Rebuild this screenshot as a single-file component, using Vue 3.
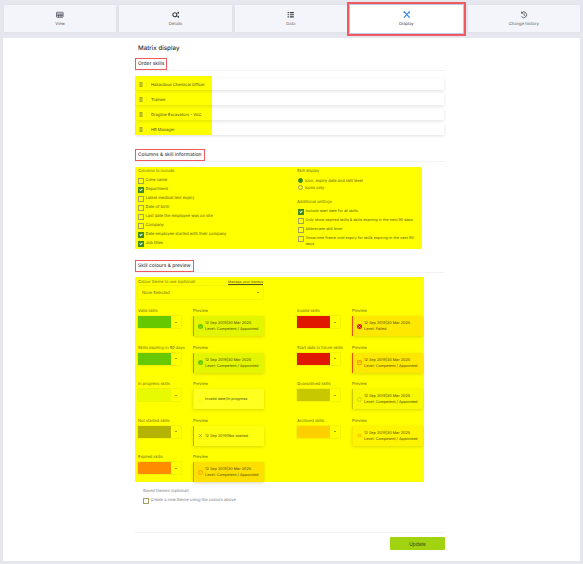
<template>
  <div class="page">
    <nav class="tabs">
      <div v-for="tab in tabs" :key="tab.label" class="tab" :class="{ active: tab.active }">
        <svg v-if="tab.icon === 'view'" viewBox="0 0 12 12" class="tab-icon"><path d="M1.500 2h9a.8.8 0 0 1 .8.8v6.400a.8.8 0 0 1-.8.8h-9a.8.8 0 0 1-.8-.8V2.800a.8.8 0 0 1 .8-.8zM.7 4.800h10.600M.7 7.400h10.600M4.200 4.800V10M7.800 4.800V10" fill="none" stroke="#3a3f4a" stroke-width="1.100"/></svg>
        <svg v-else-if="tab.icon === 'details'" viewBox="0 0 12 12" class="tab-icon"><circle cx="4.500" cy="6" r="3.200" fill="none" stroke="#3a3f4a" stroke-width="1.800"/><circle cx="10" cy="2.800" r="1.500" fill="#3a3f4a"/><circle cx="10" cy="9.200" r="1.500" fill="#3a3f4a"/></svg>
        <svg v-else-if="tab.icon === 'data'" viewBox="0 0 12 12" class="tab-icon"><path d="M1 2.500h2M4.500 2.500h6.500M1 6h2M4.500 6h6.500M1 9.500h2M4.500 9.500h6.500" fill="none" stroke="#3a3f4a" stroke-width="1.900"/></svg>
        <svg v-else-if="tab.icon === 'display'" viewBox="0 0 12 12" class="tab-icon"><path d="M2 1.500l8.500 9M10 1.500l-8.500 9" fill="none" stroke="#3d8fe8" stroke-width="2"/><circle cx="2" cy="2" r="1.500" fill="#3d8fe8"/><circle cx="10.200" cy="2" r="1.500" fill="#3d8fe8"/></svg>
        <svg v-else viewBox="0 0 12 12" class="tab-icon"><path d="M2.500 3.200A4.600 4.600 0 1 1 2.200 8.500M2.500 1v2.500H5M6.500 3.800v2.700l1.800 1.200" fill="none" stroke="#3a3f4a" stroke-width="1.200"/></svg>
        <span>{{ tab.label }}</span>
      </div>
    </nav>

    <main class="card">
      <div class="content">
        <h1>Matrix display</h1>

        <div class="section-head first"><h2>Order skills</h2></div>
        <div class="order-list">
          <div v-for="skill in orderedSkills" :key="skill" class="order-row">
            <div class="order-name">
              <span class="drag">
                <svg viewBox="0 0 6 8"><path d="M.5 1h5M.5 3h5M.5 5h5M.5 7h5" stroke="#555" stroke-width=".9"/></svg>
              </span>
              <span>{{ skill }}</span>
            </div>
          </div>
        </div>

        <div class="section-head second"><h2>Columns &amp; skill information</h2></div>
        <div class="columns-box">
          <div class="col">
            <div class="field-label">Columns to include</div>
            <label v-for="c in columnsToInclude" :key="c.label" class="check">
              <span class="box" :class="{ on: c.on }"></span>{{ c.label }}
            </label>
          </div>
          <div class="col right">
            <div class="field-label">Skill display</div>
            <label class="radio"><span class="dot on"></span>Icon, expiry date and skill level</label>
            <label class="radio"><span class="dot"></span>Icons only</label>
            <div class="field-label additional">Additional settings</div>
            <label v-for="c in additional" :key="c.label" class="check">
              <span class="box" :class="{ on: c.on }"></span><span>{{ c.label }}</span>
            </label>
          </div>
        </div>

        <div class="section-head third"><h2>Skill colours &amp; preview</h2></div>
        <div class="colours-box">
          <div class="theme-col">
            <div class="theme-label"><span>Colour theme to use (optional)</span><a>Manage your themes</a></div>
            <div class="select"><span>None Selected</span><i class="caret"></i></div>
          </div>
          <div class="skill-grid">
            <div v-for="s in skillColours" :key="s.label" class="skill">
              <div class="picker-col">
                <div class="field-label">{{ s.label }}</div>
                <div class="picker">
                  <span class="swatch" :style="{ background: s.color }"></span>
                  <span class="picker-caret"><i class="caret"></i></span>
                </div>
              </div>
              <div class="preview-col">
                <div class="field-label">Preview</div>
                <div class="preview" :style="{ background: s.bg, borderLeftColor: s.edge }">
                  <svg class="status" viewBox="0 0 10 10">
                    <template v-if="s.kind === 'tick'">
                      <circle cx="5" cy="5" r="5" :fill="s.mark"/>
                      <path d="M2.800 5.200l1.600 1.600 2.800-3.200" fill="none" stroke="#e4f500" stroke-width="1.200"/>
                    </template>
                    <template v-else-if="s.kind === 'fail'">
                      <circle cx="5" cy="5" r="5" :fill="s.mark"/>
                      <path d="M3 3l4 4M7 3l-4 4" stroke="#fff" stroke-width="1.300"/>
                    </template>
                    <template v-else-if="s.kind === 'calendar'">
                      <rect x=".8" y="1.500" width="8.400" height="7.700" fill="none" :stroke="s.mark" stroke-width="1.300"/>
                      <path d="M.8 4h8.400" :stroke="s.mark" stroke-width="1.300"/>
                    </template>
                    <path v-else-if="s.kind === 'cross'" d="M2 2l6 6M8 2l-6 6" :stroke="s.mark" stroke-width="1.200"/>
                    <rect v-else-if="s.kind === 'square'" x="1" y="1" width="8" height="8" rx="1" :fill="s.mark"/>
                    <circle v-else cx="5" cy="5" r="4" fill="none" :stroke="s.mark" stroke-width="1.500"/>
                  </svg>
                  <div>
                    <div>{{ s.line1 }}</div>
                    <div v-if="s.line2">{{ s.line2 }}</div>
                  </div>
                </div>
              </div>
            </div>
          </div>
        </div>

        <div class="saved">
          <div class="field-label">Saved themes (optional)</div>
          <label class="check"><span class="box"></span>Create a new theme using the colours above</label>
        </div>

        <div class="footer">
          <button class="update">Update</button>
        </div>
      </div>
    </main>
  </div>
</template>

<script setup>
const tabs = [
  { label: 'View', icon: 'view' },
  { label: 'Details', icon: 'details' },
  { label: 'Data', icon: 'data' },
  { label: 'Display', icon: 'display', active: true },
  { label: 'Change history', icon: 'history' }
]

const orderedSkills = ['Hazardous Chemical Officer', 'Trainee', 'Dragline Excavators - VoC', 'HR Manager']

const columnsToInclude = [
  { label: 'Crew name' },
  { label: 'Department', on: true },
  { label: 'Latest medical test expiry' },
  { label: 'Date of birth' },
  { label: 'Last date the employee was on site' },
  { label: 'Company' },
  { label: 'Date employee started with their company', on: true },
  { label: 'Job titles', on: true }
]

const additional = [
  { label: 'Include start date for all skills', on: true },
  { label: 'Only show expired skills & skills expiring in the next 90 days' },
  { label: 'Abbreviate skill level' },
  { label: 'Show time frame until expiry for skills expiring in the next 90 days' }
]

const dates = '12 Sep 2019|30 Mar 2025'
const level = 'Level: Competent / Appointed'

// order runs across the two columns
const skillColours = [
  { label: 'Valid skills', color: '#66c800', bg: '#e4f500', edge: '#66c800', mark: '#66c800', kind: 'tick', line1: dates, line2: level },
  { label: 'Invalid skills', color: '#e01800', bg: '#ffe800', edge: '#e8500a', mark: '#e01800', kind: 'fail', line1: dates, line2: 'Level: Failed' },
  { label: 'Skills expiring in 90 days', color: '#66c800', bg: '#e4f500', edge: '#66c800', mark: '#66c800', kind: 'tick', line1: dates, line2: level },
  { label: 'Start date in future skills', color: '#e01800', bg: '#ffe800', edge: '#e8500a', mark: '#f08000', kind: 'calendar', line1: dates, line2: level },
  { label: 'In progress skills', color: '#e8fa00', bg: '#ffff20', edge: '#f0f800', mark: '#f0f800', kind: 'ring', line1: 'Invalid date/In progress' },
  { label: 'Quarantined skills', color: '#c8c800', bg: '#f8f800', edge: '#c8c800', mark: '#c8c800', kind: 'ring', line1: dates, line2: level },
  { label: 'Not started skills', color: '#b3b300', bg: '#ffff10', edge: '#f09a00', mark: '#8a8a20', kind: 'cross', line1: '12 Sep 2019/Not started' },
  { label: 'Archived skills', color: '#ffd000', bg: '#fff400', edge: '#f8e800', mark: '#ffd000', kind: 'square', line1: dates, line2: level },
  { label: 'Expired skills', color: '#ff8c00', bg: '#ffdf00', edge: '#ff8c00', mark: '#ff8c00', kind: 'ring', line1: dates, line2: level }
]
</script>

<style>
html, body {
  margin: 0;
  background: #e6e6ef;
}
</style>

<style scoped>
.page {
  width: 583px;
  height: 564px;
  box-sizing: border-box;
  padding: 5px 3px 3px;
  font-family: Inter, "Liberation Sans", sans-serif;
  text-rendering: geometricPrecision;
  color: #3c3f46;
  overflow: hidden;
}

.tabs {
  display: flex;
  gap: 3px;
  height: 27px;
  margin-left: 1px;
}

.tab {
  flex: 1;
  background: #f4f5fa;
  box-shadow: 0 0 2px rgba(0, 0, 0, 0.06);
  display: flex;
  flex-direction: column;
  align-items: center;
  padding-top: 6px;
  box-sizing: border-box;
  gap: 3px;
  font-size: 4.200px;
  line-height: 5px;
  color: #555;
}

.tab.active {
  background: #fff;
  color: #333;
  outline: 2px solid #ee5a5f;
  box-shadow: inset 0 0 0 1px #b9c8e4;
  margin: -1px 1px -2px -1px;
  flex: 1.02;
  padding-top: 7px;
}

.tab-icon {
  width: 7.500px;
  height: 7.500px;
}

.card {
  background: #fff;
  margin-top: 6px;
  height: 523px;
  padding-left: 132px;
  box-sizing: border-box;
}

.content {
  width: 310px;
  padding-top: 7px;
}

h1 {
  margin: 0 0 0 3px;
  font-size: 6.200px;
  font-weight: 500;
  line-height: 8px;
  color: #2f3340;
}

.section-head {
  display: flex;
  align-items: flex-start;
  border-bottom: 1px solid #f2f2f4;
  height: 11px;
  padding-left: 1px;
}

.section-head h2 {
  margin: 0;
  padding: 0 2px;
  height: 10px;
  line-height: 10px;
  font-size: 4.900px;
  font-weight: 500;
  outline: 1px solid #ee5a5f;
  color: #3c3f46;
}

.section-head.first {
  margin-top: 6px;
}

.section-head.second {
  margin-top: 15px;
}

.section-head.third {
  margin-top: 12px;
}

.order-list {
  margin-top: 5px;
  display: flex;
  flex-direction: column;
  gap: 3px;
  background: linear-gradient(to right, #ffff00 77px, transparent 77px);
  padding: 2px 0 0;
}

.order-row {
  height: 12px;
  margin: 0 1px;
  box-shadow: 0 1px 3px rgba(0, 0, 0, 0.12);
}

.order-name {
  display: flex;
  align-items: center;
  height: 100%;
  font-size: 4.050px;
  color: #4a4a20;
}

.drag {
  width: 10px;
  margin-right: 4px;
  display: flex;
  justify-content: center;
  border-right: 1px solid rgba(0, 0, 0, 0.04);
}

.drag svg {
  width: 4px;
  height: 5px;
}

.columns-box {
  margin-top: 5px;
  width: 287px;
  height: 82px;
  background: #ffff00;
  display: grid;
  grid-template-columns: 159px 1fr;
  padding: 1px 0 0 3px;
  box-sizing: border-box;
}

.col {
  display: flex;
  flex-direction: column;
  min-width: 0;
}

.field-label {
  font-size: 4px;
  line-height: 6px;
  color: #6a6a20;
}

.col > .field-label {
  margin-bottom: 3px;
}

.check {
  display: flex;
  gap: 1.500px;
  font-size: 4.050px;
  line-height: 6px;
  height: 9px;
  color: #55551a;
}

.right .check {
  font-size: 3.800px;
  margin-left: 1px;
}

.col .check:last-child {
  height: auto;
}

.radio {
  display: flex;
  align-items: center;
  gap: 2px;
  font-size: 4px;
  height: 7px;
  color: #55551a;
  margin-left: 1px;
}

.box {
  position: relative;
  width: 4px;
  height: 4px;
  flex: none;
  border: 0.5px solid #a0a060;
  border-radius: 0.5px;
  margin-top: 0.5px;
}

.box.on {
  background: #3f8a24;
  border-color: #3f8a24;
}

.box.on::after {
  content: "";
  position: absolute;
  left: 1.300px;
  top: 0.300px;
  width: 1px;
  height: 2px;
  border: solid #e8f5d8;
  border-width: 0 0.6px 0.6px 0;
  transform: rotate(45deg);
}

.dot {
  width: 3px;
  height: 3px;
  flex: none;
  border: 0.5px solid #a0a060;
  border-radius: 50%;
}

.dot.on {
  background: #3f8a24;
  border-color: #3f8a24;
}

.additional {
  margin-top: 8px;
}

.colours-box {
  margin-top: 4px;
  width: 289px;
  height: 205px;
  background: #ffff00;
  padding: 2px 3px 0;
  box-sizing: border-box;
}

.theme-col {
  width: 125px;
}

.theme-label {
  display: flex;
  justify-content: space-between;
  font-size: 4px;
  line-height: 6px;
  color: #6a6a20;
}

.theme-label a {
  font-size: 3.500px;
  text-decoration: underline;
  color: #55551a;
}

.select {
  margin-top: 1px;
  height: 13px;
  display: flex;
  align-items: center;
  justify-content: space-between;
  padding: 0 4px;
  font-size: 4px;
  color: #66661a;
  box-shadow: 0 0 1px rgba(120, 120, 0, 0.5);
}

.caret {
  display: block;
  width: 0;
  height: 0;
  border-left: 1.200px solid transparent;
  border-right: 1.200px solid transparent;
  border-top: 1.500px solid #333;
}

.skill-grid {
  margin-top: 9px;
  display: grid;
  grid-template-columns: 159px 1fr;
  grid-auto-rows: 36.500px;
}

.skill {
  display: flex;
}

.picker-col {
  width: 55px;
  flex: none;
}

.picker-col .field-label {
  white-space: nowrap;
}

.picker {
  margin-top: 2px;
  width: 43px;
  height: 12px;
  display: flex;
  box-shadow: 0 0 1px rgba(120, 120, 0, 0.6);
}

.swatch {
  width: 33px;
  height: 100%;
}

.picker-caret {
  flex: 1;
  display: flex;
  align-items: center;
  justify-content: center;
}

.preview-col {
  width: 71px;
  flex: none;
}

.preview {
  margin-top: 2px;
  height: 20px;
  border-left: 1px solid transparent;
  display: flex;
  align-items: center;
  gap: 2px;
  padding-left: 4px;
  box-sizing: border-box;
  font-size: 3.800px;
  line-height: 6px;
  color: #4a4a14;
  box-shadow: 0 1px 3px rgba(130, 130, 0, 0.3);
  white-space: nowrap;
}

.status {
  width: 5px;
  height: 5px;
  flex: none;
}

.saved {
  margin-top: 6px;
  padding-left: 8px;
  display: flex;
  flex-direction: column;
  gap: 3px;
}

.saved .field-label,
.saved .check {
  color: #777;
}

.footer {
  margin-top: 26px;
  border-top: 1px solid #f2f2f4;
  display: flex;
  justify-content: flex-end;
  padding-top: 4px;
}

.update {
  width: 55px;
  height: 13px;
  border: 0;
  padding: 0;
  border-radius: 1px;
  background: #a2d311;
  font-family: inherit;
  font-size: 4.800px;
  font-weight: 500;
  color: #4c5a10;
}
</style>
